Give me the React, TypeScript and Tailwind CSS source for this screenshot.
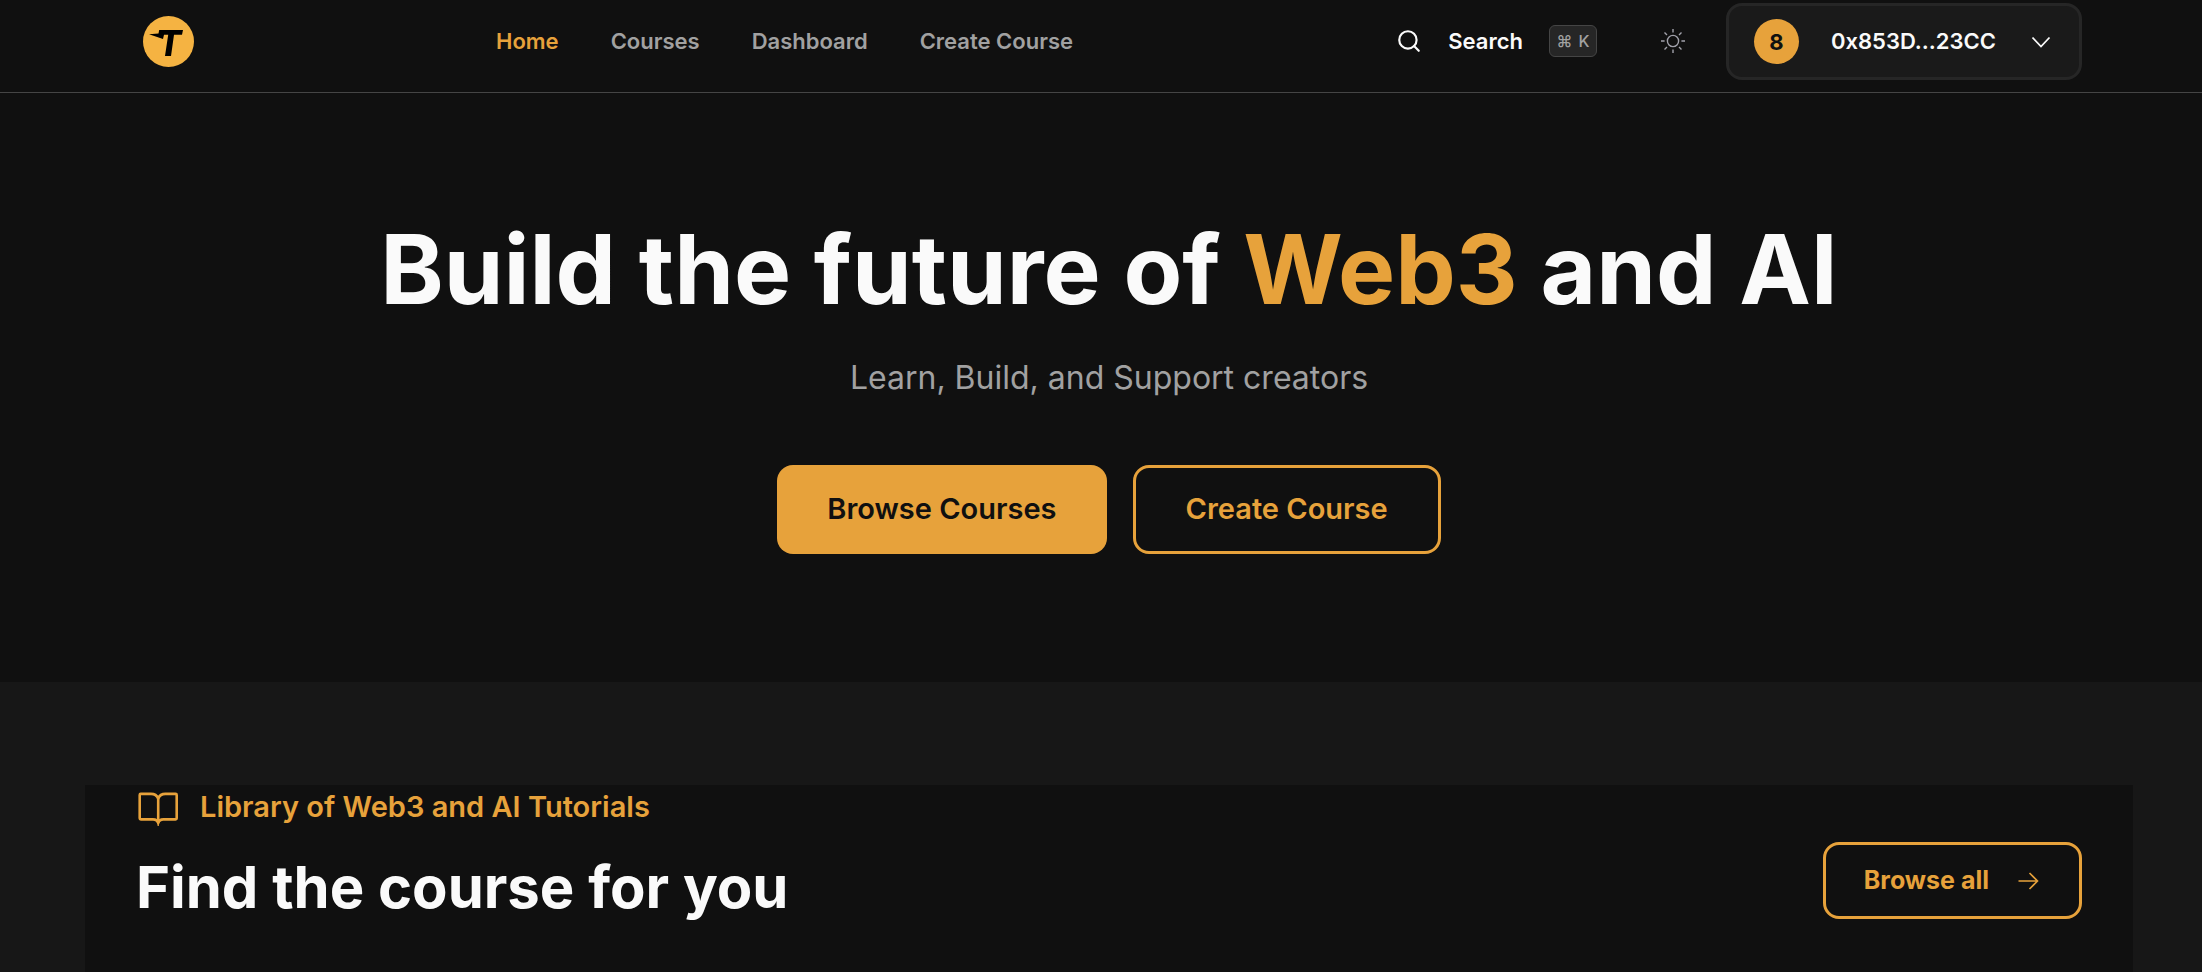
import { Search } from "lucide-react";

const navLinks = [
    { label: "Home", href: "#home", active: true },
    { label: "Courses", href: "#courses", active: false },
    { label: "Dashboard", href: "#dashboard", active: false },
    { label: "Create Course", href: "#create", active: false },
];

function Logo() {
    return (
        <svg viewBox="0 0 51 51" className="w-[51px] h-[51px]" aria-hidden="true">
            <circle cx="25.5" cy="25.5" r="25.5" fill="#f5b342" />
            <path d="M16.200 14H40L39 18.800H31L28 40H22L25.200 18.800H21L20 23L6 18.300L15.500 17.500Z" fill="#000" />
        </svg>
    );
}

function SunIcon() {
    return (
        <svg viewBox="0 0 24 24" className="w-6 h-6" fill="none" stroke="currentColor" strokeWidth="1.4" aria-hidden="true">
            <circle cx="12" cy="12" r="5.600" />
            <path d="M12 0v3.600M12 20.400V24M0 12h3.600M20.400 12H24M3.500 3.500l2.500 2.500M18 18l2.500 2.500M3.500 20.500l2.500-2.500M18 6l2.500-2.500" />
        </svg>
    );
}

function BookIcon() {
    return (
        <svg viewBox="0 0 45 45" className="w-[45px] h-[45px]" fill="none" stroke="currentColor" strokeWidth="2.6" strokeLinejoin="round" aria-hidden="true">
            <path d="M22.200 13.500C21 10.500 18.500 8.900 15 8.900H4.800C4.200 8.900 3.700 9.400 3.700 10V33.300C3.700 34 4.200 34.400 4.800 34.400H17C19.500 34.400 21.500 35.500 22.200 38C22.900 35.500 24.900 34.400 27.400 34.400H39.600C40.200 34.400 40.700 34 40.700 33.300V10C40.700 9.400 40.200 8.900 39.600 8.900H29.400C25.900 8.900 23.400 10.500 22.200 13.500Z" />
            <path d="M22.200 12.500V37" />
            <path d="M19 34.400C20.800 35.500 21.600 38 22.200 41C22.800 38 23.600 35.500 25.400 34.400Z" fill="currentColor" strokeWidth="0.8" />
        </svg>
    );
}

function Header() {
    return (
        <header className="border-b border-[#454545] pl-4">
            <div className="max-w-[2048px] mx-auto px-[51px] pt-[3px] pb-3 flex items-center justify-between">
                <div className="flex items-center">
                    <a href="#home" aria-label="Home" className="px-[7px]">
                        <Logo />
                    </a>
                    <nav className="ml-[295px] pb-0.5 flex items-center gap-[52px] text-[22px] leading-8 font-semibold">
                        {navLinks.map((link) => (
                            <a
                                key={link.label}
                                href={link.href}
                                className={link.active ? "text-[#e7a23b]" : "text-[#a1a1a1]"}
                            >
                                {link.label}
                            </a>
                        ))}
                    </nav>
                </div>
                <div className="flex items-center">
                    <button type="button" className="pb-0.5 flex items-center gap-[26px] text-[22px] leading-8 font-semibold">
                        <Search className="w-[26px] h-[26px]" strokeWidth={2} />
                        Search
                        <kbd className="h-8 w-12 flex items-center justify-center gap-1.5 rounded-md border border-[#454545] bg-[#262626] font-['Inter',sans-serif] text-base font-medium text-[#a1a1a1]">
                            <span>⌘</span>K
                        </kbd>
                    </button>
                    <button type="button" aria-label="Toggle theme" className="ml-[38px] mr-[15px] px-[26px] pb-0.5 text-[#a1a1aa]">
                        <SunIcon />
                    </button>
                    <button
                        type="button"
                        className="h-[77px] flex items-center gap-8 rounded-2xl border-3 border-[#262626] bg-[#1a1a1a] px-[25px] text-[22px] leading-8 font-semibold"
                    >
                        <span className="w-[45px] h-[45px] rounded-full bg-[#e7a23b] text-[#101010] flex items-center justify-center font-bold">
                            8
                        </span>
                        <span className="pb-0.5">0x853D...23CC</span>
                        <svg viewBox="0 0 26 26" className="w-[26px] h-[26px]" fill="none" stroke="currentColor" strokeWidth="1.8" aria-hidden="true">
                            <path d="M4.500 8.500l8.500 9l8.500-9" />
                        </svg>
                    </button>
                </div>
            </div>
        </header>
    );
}

function Hero() {
    return (
        <section className="pl-4 pt-32 pb-32 flex flex-col items-center text-center">
            <h1 className="text-[96px] leading-[96px] font-bold">
                Build the future of <span className="text-[#e7a23b]">Web3</span> and AI
            </h1>
            <p className="mt-[38px] text-[32px] leading-[45px] text-[#a1a1a1]">Learn, Build, and Support creators</p>
            <div className="mt-[65px] flex gap-[26px] text-[29px] leading-[45px] font-semibold">
                <button type="button" className="rounded-2xl bg-[#e7a23b] text-[#101010] px-[50px] pt-[21px] pb-[23px]">
                    Browse Courses
                </button>
                <button type="button" className="rounded-2xl border-3 border-[#e7a23b] text-[#e7a23b] px-[50px] pt-[18px] pb-5">
                    Create Course
                </button>
            </div>
        </section>
    );
}

function CourseLibrary() {
    return (
        <section className="bg-[#171717] pl-4 pt-[103px]">
            <div className="max-w-[2048px] mx-auto bg-[#101010] px-[51px] pb-16 flex items-end justify-between">
                <div>
                    <div className="flex items-center gap-[19px] text-[29px] leading-[43px] font-semibold text-[#e7a23b]">
                        <BookIcon />
                        <span className="pb-0.5">Library of Web3 and AI Tutorials</span>
                    </div>
                    <h2 className="mt-[25px] text-[58px] leading-16 font-bold">Find the course for you</h2>
                </div>
                <button
                    type="button"
                    className="h-[77px] flex items-center gap-[26px] rounded-2xl border-3 border-[#e7a23b] px-[38px] text-[25px] leading-[38px] font-bold text-[#e7a23b]"
                >
                    <span className="pb-0.5">Browse all</span>
                    <svg viewBox="0 0 26 26" className="w-[26px] h-[26px]" fill="none" stroke="currentColor" strokeWidth="1.6" aria-hidden="true">
                        <path d="M3.500 13h19M14.500 5l8 8l-8 8" />
                    </svg>
                </button>
            </div>
        </section>
    );
}

export default function App() {
    return (
        <div className="min-h-screen bg-[#101010] text-[#fafafa] font-['Inter',sans-serif]">
            <Header />
            <main>
                <Hero />
                <CourseLibrary />
            </main>
        </div>
    );
}
